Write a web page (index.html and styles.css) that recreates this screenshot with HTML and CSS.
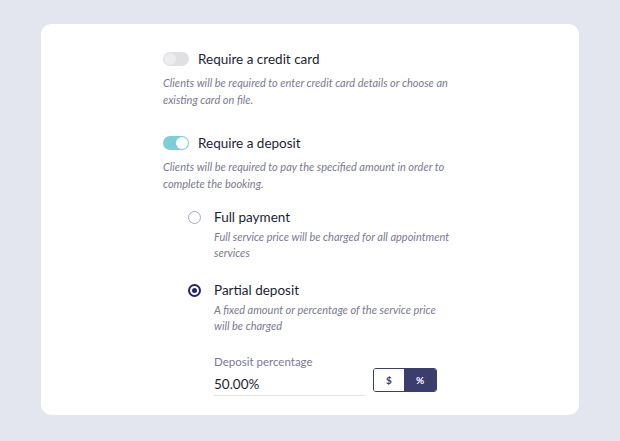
FILE: index.html
```html
<!DOCTYPE html>
<html lang="en">
<head>
    <meta charset="UTF-8">
    <title>Deposit settings</title>
    <link rel="stylesheet" href="styles.css">
</head>
<body>
    <div class="card">
        <div class="content">
            <div class="setting">
                <div class="setting-row">
                    <span class="toggle"><span class="knob"></span></span>
                    <span class="setting-title">Require a credit card</span>
                </div>
                <p class="description">
                    Clients will be required to enter credit card details or choose an existing card on file.
                </p>
            </div>

            <div class="setting">
                <div class="setting-row">
                    <span class="toggle on"><span class="knob"></span></span>
                    <span class="setting-title">Require a deposit</span>
                </div>
                <p class="description">
                    Clients will be required to pay the specified amount in order to complete the booking.
                </p>
            </div>

            <div class="options">
                <div class="option">
                    <div class="setting-row">
                        <span class="radio"></span>
                        <span class="setting-title">Full payment</span>
                    </div>
                    <p class="description">
                        Full service price will be charged for all appointment services
                    </p>
                </div>
                <div class="option">
                    <div class="setting-row">
                        <span class="radio checked"></span>
                        <span class="setting-title">Partial deposit</span>
                    </div>
                    <p class="description">
                        A fixed amount or percentage of the service price will be charged
                    </p>
                </div>

                <div class="deposit">
                    <div class="field">
                        <label class="field-label">Deposit percentage</label>
                        <div class="field-value">50.00%</div>
                    </div>
                    <div class="unit-switch">
                        <span class="unit">$</span>
                        <span class="unit active">%</span>
                    </div>
                </div>
            </div>
        </div>
    </div>
</body>
</html>
```

FILE: styles.css
```css
body {
    margin: 0;
    padding: 24px 41px 26px;
    background-color: #e3e6ee;
    font-family: "Lato", "Open Sans", sans-serif;
    color: #1d1d35;
}
.card {
    background: #fff;
    border-radius: 10px;
    padding: 27px 0 19px 122px;
    height: 345px;
}
.content {
    width: 300px;
}
.setting {
    margin-bottom: 27px;
}
.setting-row {
    display: flex;
    align-items: center;
    height: 16px;
}
.setting-title {
    font-size: 13.5px;
}
.toggle {
    position: relative;
    width: 26px;
    height: 14px;
    border-radius: 7px;
    background: #e0e0e3;
    margin-right: 9px;
}
.toggle .knob {
    position: absolute;
    top: 1px;
    left: 1px;
    width: 12px;
    height: 12px;
    border-radius: 50%;
    background: #ececef;
}
.toggle.on {
    background: #7ccfd5;
}
.toggle.on .knob {
    left: 13px;
    background: #fff;
}
.description {
    margin: 8px 0 0;
    font-size: 11px;
    line-height: 16.5px;
    font-style: italic;
    color: #7b7a92;
}
.options {
    padding-left: 25px;
    margin-top: -10px;
}
.option {
    margin-bottom: 21px;
}
.option .description {
    margin-left: 26px;
    margin-top: 4px;
    line-height: 16px;
    width: 237px;
}
.radio {
    box-sizing: border-box;
    width: 13px;
    height: 13px;
    border-radius: 50%;
    border: 1.5px solid #a8a9c4;
    margin-right: 13px;
    display: flex;
    align-items: center;
    justify-content: center;
}
.radio.checked {
    border: 2px solid #23246a;
}
.radio.checked::after {
    content: "";
    width: 5px;
    height: 5px;
    border-radius: 50%;
    background: #23246a;
}
.deposit {
    display: flex;
    align-items: flex-end;
    margin-left: 26px;
    margin-top: 3px;
}
.field {
    width: 151px;
    border-bottom: 1px solid #e2e2e8;
    padding-bottom: 3px;
}
.field-label {
    display: block;
    font-size: 11.5px;
    color: #7b7a92;
}
.field-value {
    font-size: 13.5px;
    margin-top: 8px;
}
.unit-switch {
    display: flex;
    margin-left: 8px;
    margin-bottom: 4px;
    border: 1px solid #3b3d6c;
    border-radius: 3px;
    overflow: hidden;
}
.unit {
    width: 30px;
    height: 22px;
    display: flex;
    align-items: center;
    justify-content: center;
    font-size: 10px;
    font-weight: bold;
    color: #3b3d6c;
    background: #fff;
}
.unit.active {
    background: #3b3d6c;
    color: #fff;
    width: 32px;
}
```
